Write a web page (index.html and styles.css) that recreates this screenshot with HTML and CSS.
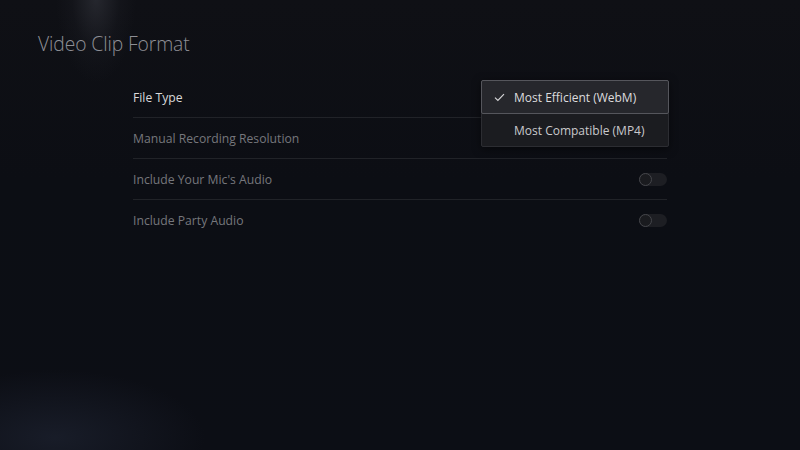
FILE: index.html
```html
<!DOCTYPE html>
<html>
<head>
<meta charset="utf-8">
<link rel="stylesheet" href="styles.css">
</head>
<body>
<div class="screen">
  <div class="beam"></div>
  <div class="glow"></div>
  <h1 class="title">Video Clip Format</h1>
  <div class="list">
    <div class="row row-focus">
      <span class="label label-active">File Type</span>
      <div class="dropdown">
        <div class="opt opt-sel">
          <svg class="check" viewBox="0 0 12 10" width="11" height="9"><path d="M1 5.2 L4.2 8.2 L11 1.2" fill="none" stroke="#d6d6d8" stroke-width="1.3"/></svg>
          <span>Most Efficient (WebM)</span>
        </div>
        <div class="opt">
          <span class="check-space"></span>
          <span>Most Compatible (MP4)</span>
        </div>
      </div>
    </div>
    <div class="row">
      <span class="label">Manual Recording Resolution</span>
    </div>
    <div class="row">
      <span class="label">Include Your Mic's Audio</span>
      <span class="toggle"><span class="knob"></span></span>
    </div>
    <div class="row">
      <span class="label">Include Party Audio</span>
      <span class="toggle"><span class="knob"></span></span>
    </div>
  </div>
</div>
</body>
</html>
```
FILE: styles.css
```css
* { box-sizing: border-box; }
html, body { margin: 0; padding: 0; }
body {
  width: 800px;
  height: 450px;
  overflow: hidden;
  background: #0c0e14;
  font-family: "Open Sans", "Noto Sans", sans-serif;
}
.screen {
  position: relative;
  width: 800px;
  height: 450px;
  overflow: hidden;
  padding: 30px 0 0 0;
  background: linear-gradient(180deg, #0f1015 0%, #0c0e14 40%, #0c0e15 100%);
}
.beam {
  position: absolute;
  left: 0;
  top: -30px;
  width: 200px;
  height: 140px;
  background: radial-gradient(ellipse 40px 85px at 48% 20%, rgba(72,74,84,0.4), rgba(45,47,56,0.14) 60%, rgba(0,0,0,0) 100%);
  pointer-events: none;
}
.glow {
  position: absolute;
  left: -80px;
  top: 340px;
  width: 300px;
  height: 150px;
  background: radial-gradient(ellipse 50% 45% at 45% 65%, rgba(34,40,56,0.55), rgba(0,0,0,0) 100%);
  pointer-events: none;
}
.title {
  position: relative;
  margin: 0 0 0 38px;
  font-family: "Open Sans", sans-serif;
  font-weight: 300;
  font-size: 19.3px;
  line-height: 28px;
  color: #8e8f95;
  letter-spacing: -0.1px;
}
.list {
  position: relative;
  margin: 19px 0 0 133px;
  width: 534px;
}
.row {
  position: relative;
  display: flex;
  align-items: center;
  justify-content: space-between;
  height: 41px;
  border-bottom: 1px solid #212328;
}
.row:last-child { border-bottom: none; }
.label {
  font-size: 12.2px;
  color: #76777c;
}
.label-active { color: #d9d9db; }
.toggle {
  position: relative;
  display: block;
  width: 28px;
  height: 13px;
  border-radius: 7px;
  background: #1d1e23;
}
.knob {
  position: absolute;
  left: 0;
  top: 0;
  width: 13px;
  height: 13px;
  border-radius: 50%;
  border: 1.5px solid #45464b;
  background: #1a1b1f;
}
.dropdown {
  position: absolute;
  right: -2px;
  top: 3px;
  width: 188px;
  background: #1b1c20;
  border: 1px solid #2c2d32;
  border-radius: 2px;
  box-shadow: 0 2px 8px rgba(0,0,0,0.5);
  z-index: 2;
}
.opt {
  display: flex;
  align-items: center;
  height: 32px;
  padding-left: 12px;
  font-size: 12px;
  color: #c9c9cc;
}
.opt-sel {
  height: 34px;
  background: #26272c;
  border: 1px solid #55565c;
  border-radius: 2px;
  margin: -1px -1px 0 -1px;
  color: #dcdcde;
}
.check { margin-right: 9px; flex: none; }
.check-space { display: inline-block; width: 20px; flex: none; }
```
